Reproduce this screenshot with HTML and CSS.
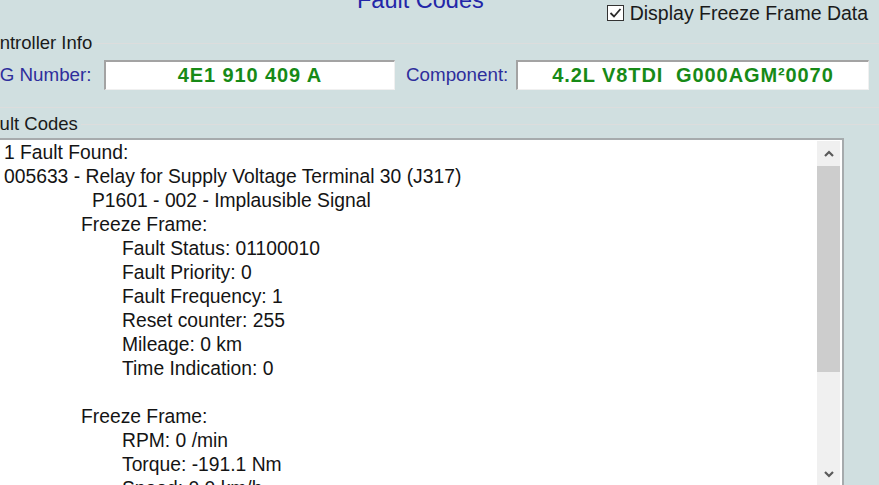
FILE: index.html
```html
<!DOCTYPE html>
<html lang="en">
<head>
    <meta charset="UTF-8">
    <meta name="viewport" content="width=device-width, initial-scale=1.0">
    <title>Fault Codes</title>
    <link rel="stylesheet" href="styles.css">
</head>
<body>

<div class="window">
    <div class="header">
        <h1 class="title">Fault Codes</h1>
        <label class="freeze-check">
            <span class="checkbox">
                <svg width="13" height="12" viewBox="0 0 13 12"><path d="M1.5 6 L5 9.5 L11.5 2" fill="none" stroke="#2a2a2a" stroke-width="1.8"/></svg>
            </span>
            Display Freeze Frame Data
        </label>
    </div>

    <div class="group group-info">
        <div class="legend"><span>Controller Info</span><div class="rule"></div></div>
        <div class="info-row">
            <span class="field-label label-vag">VAG Number:</span>
            <div class="field field-vag">4E1 910 409 A</div>
            <span class="field-label label-comp">Component:</span>
            <div class="field field-comp">4.2L V8TDI&nbsp;&nbsp;G000AGM²0070</div>
        </div>
    </div>

    <div class="group group-codes">
        <div class="legend"><span>Fault Codes</span><div class="rule"></div></div>
        <div class="textbox">
            <div class="lines">
                <div class="ln">1 Fault Found:</div>
                <div class="ln">005633 - Relay for Supply Voltage Terminal 30 (J317)</div>
                <div class="ln ind-code">P1601 - 002 - Implausible Signal</div>
                <div class="ln ind-frame">Freeze Frame:</div>
                <div class="ln ind-data">Fault Status: 01100010</div>
                <div class="ln ind-data">Fault Priority: 0</div>
                <div class="ln ind-data">Fault Frequency: 1</div>
                <div class="ln ind-data">Reset counter: 255</div>
                <div class="ln ind-data">Mileage: 0 km</div>
                <div class="ln ind-data">Time Indication: 0</div>
                <div class="ln">&nbsp;</div>
                <div class="ln ind-frame">Freeze Frame:</div>
                <div class="ln ind-data">RPM: 0 /min</div>
                <div class="ln ind-data">Torque: -191.1 Nm</div>
                <div class="ln ind-data">Speed: 0.0 km/h</div>
            </div>
            <div class="scrollbar">
                <div class="sb-btn">
                    <svg width="10" height="7" viewBox="0 0 10 7"><path d="M1 6 L5 2 L9 6" fill="none" stroke="#5a5a5a" stroke-width="2.2"/></svg>
                </div>
                <div class="sb-track"><div class="sb-thumb"></div></div>
                <div class="sb-btn">
                    <svg width="10" height="7" viewBox="0 0 10 7"><path d="M1 1 L5 5 L9 1" fill="none" stroke="#5a5a5a" stroke-width="2.2"/></svg>
                </div>
            </div>
        </div>
    </div>
</div>

</body>
</html>
```

FILE: styles.css
```css
html, body {
    margin: 0;
    padding: 0;
    height: 100%;
    overflow: hidden;
}
body {
    background-color: #d0dfe0;
    font-family: "Liberation Sans", Arial, sans-serif;
    color: #151515;
}
.window {
    margin-left: -24px;
    width: 920px;
}
.header {
    display: flex;
    align-items: flex-start;
    height: 26px;
}
.title {
    margin: -12px 0 0 381px;
    font-size: 23.5px;
    line-height: 24px;
    font-weight: normal;
    color: #2326a8;
}
.freeze-check {
    display: flex;
    align-items: center;
    margin-left: 123px;
    margin-top: 2px;
    font-size: 19.5px;
    line-height: 22px;
    color: #1a1a1a;
}
.checkbox {
    display: flex;
    align-items: center;
    justify-content: center;
    width: 15px;
    height: 14px;
    border: 1px solid #333;
    background-color: #fff;
    margin-right: 6px;
}
.legend {
    display: flex;
    align-items: center;
    height: 20px;
    font-size: 18.5px;
    color: #1a1a1a;
}
.legend .rule {
    flex: 1;
    margin-left: 3px;
    height: 0;
    border-top: 1px solid #dcdddd;
}
.group-info {
    margin-top: 7px;
    padding-bottom: 17px;
    border-bottom: 1px solid #dcdddd;
}
.info-row {
    display: flex;
    align-items: center;
    margin-top: 7px;
}
.field-label {
    font-size: 18.8px;
    color: #2e2e9c;
}
.label-vag {
    width: 128px;
}
.label-comp {
    width: 110px;
    padding-left: 11px;
}
.field {
    box-sizing: border-box;
    height: 30px;
    background-color: #fff;
    border-top: 2px solid #a3a3a3;
    border-left: 2px solid #a3a3a3;
    border-right: 1px solid #f0f0f0;
    border-bottom: 1px solid #f0f0f0;
    color: #178a17;
    font-weight: bold;
    font-size: 20px;
    letter-spacing: 0.9px;
    line-height: 27px;
    text-align: center;
}
.field-vag {
    width: 291px;
}
.field-comp {
    width: 353px;
}
.group-codes {
    margin-top: 6px;
}
.group-codes .legend {
    padding-left: 2px;
}
.textbox {
    display: flex;
    box-sizing: border-box;
    width: 868px;
    height: 350px;
    margin-top: 4px;
    background-color: #fff;
    border: 2px solid #a6abad;
}
.lines {
    flex: 1;
    padding: 1px 0 0 26px;
    font-size: 19.3px;
    line-height: 24px;
    color: #141414;
    white-space: nowrap;
    overflow: hidden;
}
.ind-code {
    padding-left: 88px;
}
.ind-frame {
    padding-left: 77px;
}
.ind-data {
    padding-left: 118px;
}
.scrollbar {
    display: flex;
    flex-direction: column;
    width: 23px;
    margin: 1px 2px 0 0;
    background-color: #f0f0f0;
}
.sb-btn {
    display: flex;
    align-items: center;
    justify-content: center;
    height: 24px;
}
.sb-track {
    flex: 1;
    padding-top: 1px;
}
.sb-thumb {
    height: 206px;
    background-color: #cdcdcd;
}
```
